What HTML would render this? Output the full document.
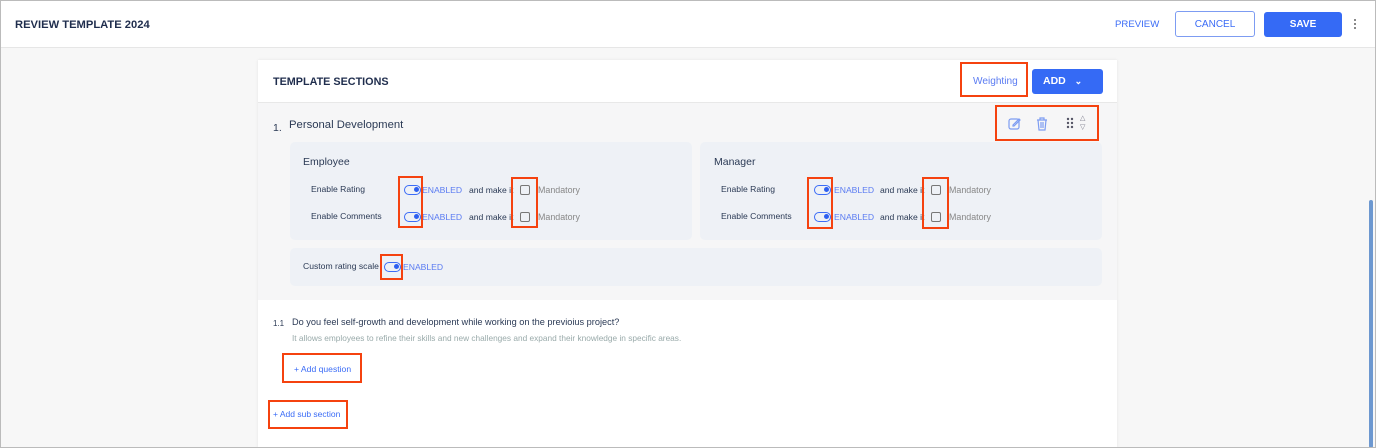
<!DOCTYPE html>
<html><head><style>
*{box-sizing:border-box;margin:0;padding:0}
body{width:1376px;height:448px;overflow:hidden;background:#f7f7f7;font-family:"Liberation Sans",sans-serif;position:relative;color:#2b3a55}
.a{position:absolute;white-space:nowrap}
.red{position:absolute;border:2px solid #f5420f}
.tg{position:absolute;width:17px;height:10px;border:1.5px solid #3b6cf6;border-radius:6px}
.tg:after{content:"";position:absolute;right:1px;top:1px;width:5px;height:5px;border-radius:50%;background:#2d5ff0}
.cb{position:absolute;width:10px;height:10px;border:1.3px solid #777;border-radius:2px}
.s{font-size:8.6px}
.en{color:#5b7cf2;font-size:8.6px}
.g{color:#888;font-size:8.9px}
</style></head><body>
<div class="a" style="left:0;top:0;width:1376px;height:48px;background:#fff;border-bottom:1px solid #e6e6e6;border-top:1px solid #ccc"></div>
<div class="a" style="left:0;top:0;width:1376px;height:448px;border:1px solid #bbb;pointer-events:none;z-index:9"></div>
<div class="a" style="left:15px;top:19px;font-size:11.2px;font-weight:bold;color:#1f2d4d">REVIEW TEMPLATE 2024</div>
<div class="a" style="left:1115px;top:19px;font-size:9.6px;color:#3b6cf6">PREVIEW</div>
<div class="a" style="left:1175px;top:11px;width:80px;height:26px;border:1px solid #7d9cf2;border-radius:3px;color:#3b6cf6;font-size:10px;text-align:center;line-height:25px">CANCEL</div>
<div class="a" style="left:1264px;top:12px;width:78px;height:25px;background:#356af5;border-radius:3px;color:#fff;font-size:10px;font-weight:bold;text-align:center;line-height:25px">SAVE</div>
<div class="a" style="left:1354px;top:19px;width:2px;height:10px;border-left:2px dotted #888"></div>

<div class="a" style="left:258px;top:60px;width:859px;height:388px;background:#fff;box-shadow:0 0 3px rgba(0,0,0,.08)"></div>
<div class="a" style="left:258px;top:102px;width:859px;height:198px;background:#f6f6f7;border-top:1px solid #e8e8e8"></div>
<div class="a" style="left:273px;top:76px;font-size:10.8px;font-weight:bold;color:#1f2d4d">TEMPLATE SECTIONS</div>
<div class="a" style="left:973px;top:76px;font-size:10.1px;color:#5b7cf2">Weighting</div>
<div class="red" style="left:960px;top:62px;width:68px;height:35px"></div>
<div class="a" style="left:1032px;top:69px;width:71px;height:25px;background:#356af5;border-radius:3px;color:#fff;font-size:10.5px;font-weight:bold;line-height:25px;padding-left:11px">ADD <span style="font-size:9px;margin-left:6px">&#8964;</span></div>

<div class="a" style="left:273px;top:122px;font-size:10.5px">1.</div>
<div class="a" style="left:289px;top:119px;font-size:11.3px">Personal Development</div>
<div class="red" style="left:995px;top:105px;width:104px;height:36px"></div>
<svg class="a" style="left:1008px;top:117px" width="14" height="14" viewBox="0 0 14 14" fill="none" stroke="#7d9cf2" stroke-width="1.2"><rect x="1" y="2" width="10" height="10" rx="2"/><path d="M5 8l6-6 1 1-6 6H5z"/></svg>
<svg class="a" style="left:1036px;top:117px" width="12" height="14" viewBox="0 0 12 14" fill="none" stroke="#7d9cf2" stroke-width="1.2"><path d="M1 3h10M4 3V1h4v2M2 3l1 10h6l1-10M5 5v6M7 5v6"/></svg>
<svg class="a" style="left:1066px;top:117px" width="8" height="12" viewBox="0 0 8 12" fill="#556"><circle cx="2" cy="2" r="1.2"/><circle cx="6" cy="2" r="1.2"/><circle cx="2" cy="6" r="1.2"/><circle cx="6" cy="6" r="1.2"/><circle cx="2" cy="10" r="1.2"/><circle cx="6" cy="10" r="1.2"/></svg>
<div class="a" style="left:1080px;top:114px;font-size:7px;color:#778;line-height:9px">&#9651;<br>&#9661;</div>

<div class="a" style="left:290px;top:142px;width:402px;height:98px;background:#eef1f6;border-radius:5px"></div>
<div class="a" style="left:700px;top:142px;width:402px;height:98px;background:#eef1f6;border-radius:5px"></div>
<div class="a" style="left:290px;top:248px;width:812px;height:38px;background:#eef1f6;border-radius:5px"></div>

<div class="a" style="left:303px;top:156px;font-size:10.5px">Employee</div>
<div class="a s" style="left:311px;top:184px">Enable Rating</div>
<div class="a s" style="left:311px;top:211px">Enable Comments</div>
<div class="tg" style="left:404px;top:185px"></div><div class="a en" style="left:422px;top:185px">ENABLED</div>
<div class="tg" style="left:404px;top:212px"></div><div class="a en" style="left:422px;top:212px">ENABLED</div>
<div class="a s" style="left:469px;top:185px">and make it</div>
<div class="a s" style="left:469px;top:212px">and make it</div>
<div class="cb" style="left:520px;top:185px"></div><div class="cb" style="left:520px;top:212px"></div>
<div class="a g" style="left:538px;top:185px">Mandatory</div>
<div class="a g" style="left:538px;top:212px">Mandatory</div>
<div class="red" style="left:398px;top:176px;width:25px;height:52px"></div>
<div class="red" style="left:511px;top:177px;width:27px;height:51px"></div>

<div class="a" style="left:714px;top:156px;font-size:10.5px">Manager</div>
<div class="a s" style="left:721px;top:184px">Enable Rating</div>
<div class="a s" style="left:721px;top:211px">Enable Comments</div>
<div class="tg" style="left:814px;top:185px"></div><div class="a en" style="left:834px;top:185px">ENABLED</div>
<div class="tg" style="left:814px;top:212px"></div><div class="a en" style="left:834px;top:212px">ENABLED</div>
<div class="a s" style="left:880px;top:185px">and make it</div>
<div class="a s" style="left:880px;top:212px">and make it</div>
<div class="cb" style="left:931px;top:185px"></div><div class="cb" style="left:931px;top:212px"></div>
<div class="a g" style="left:949px;top:185px">Mandatory</div>
<div class="a g" style="left:949px;top:212px">Mandatory</div>
<div class="red" style="left:807px;top:177px;width:26px;height:52px"></div>
<div class="red" style="left:922px;top:177px;width:27px;height:52px"></div>

<div class="a s" style="left:303px;top:261px;font-size:8.6px">Custom rating scale</div>
<div class="tg" style="left:384px;top:262px"></div><div class="a en" style="left:403px;top:262px">ENABLED</div>
<div class="red" style="left:380px;top:254px;width:23px;height:26px"></div>

<div class="a" style="left:273px;top:319px;font-size:8px">1.1</div>
<div class="a" style="left:292px;top:317px;font-size:9.2px">Do you feel self-growth and development while working on the previoius project?</div>
<div class="a" style="left:292px;top:333px;font-size:8.3px;color:#9aa">It allows employees to refine their skills and new challenges and expand their knowledge in specific areas.</div>
<div class="a" style="left:294px;top:364px;font-size:8.6px;color:#3b6cf6">+ Add question</div>
<div class="red" style="left:282px;top:353px;width:80px;height:30px"></div>
<div class="a" style="left:273px;top:409px;font-size:8.5px;color:#3b6cf6">+ Add sub section</div>
<div class="red" style="left:268px;top:400px;width:80px;height:29px"></div>

<div class="a" style="left:1369px;top:200px;width:4px;height:248px;background:#6d98d0;border-radius:2px"></div>
</body></html>
